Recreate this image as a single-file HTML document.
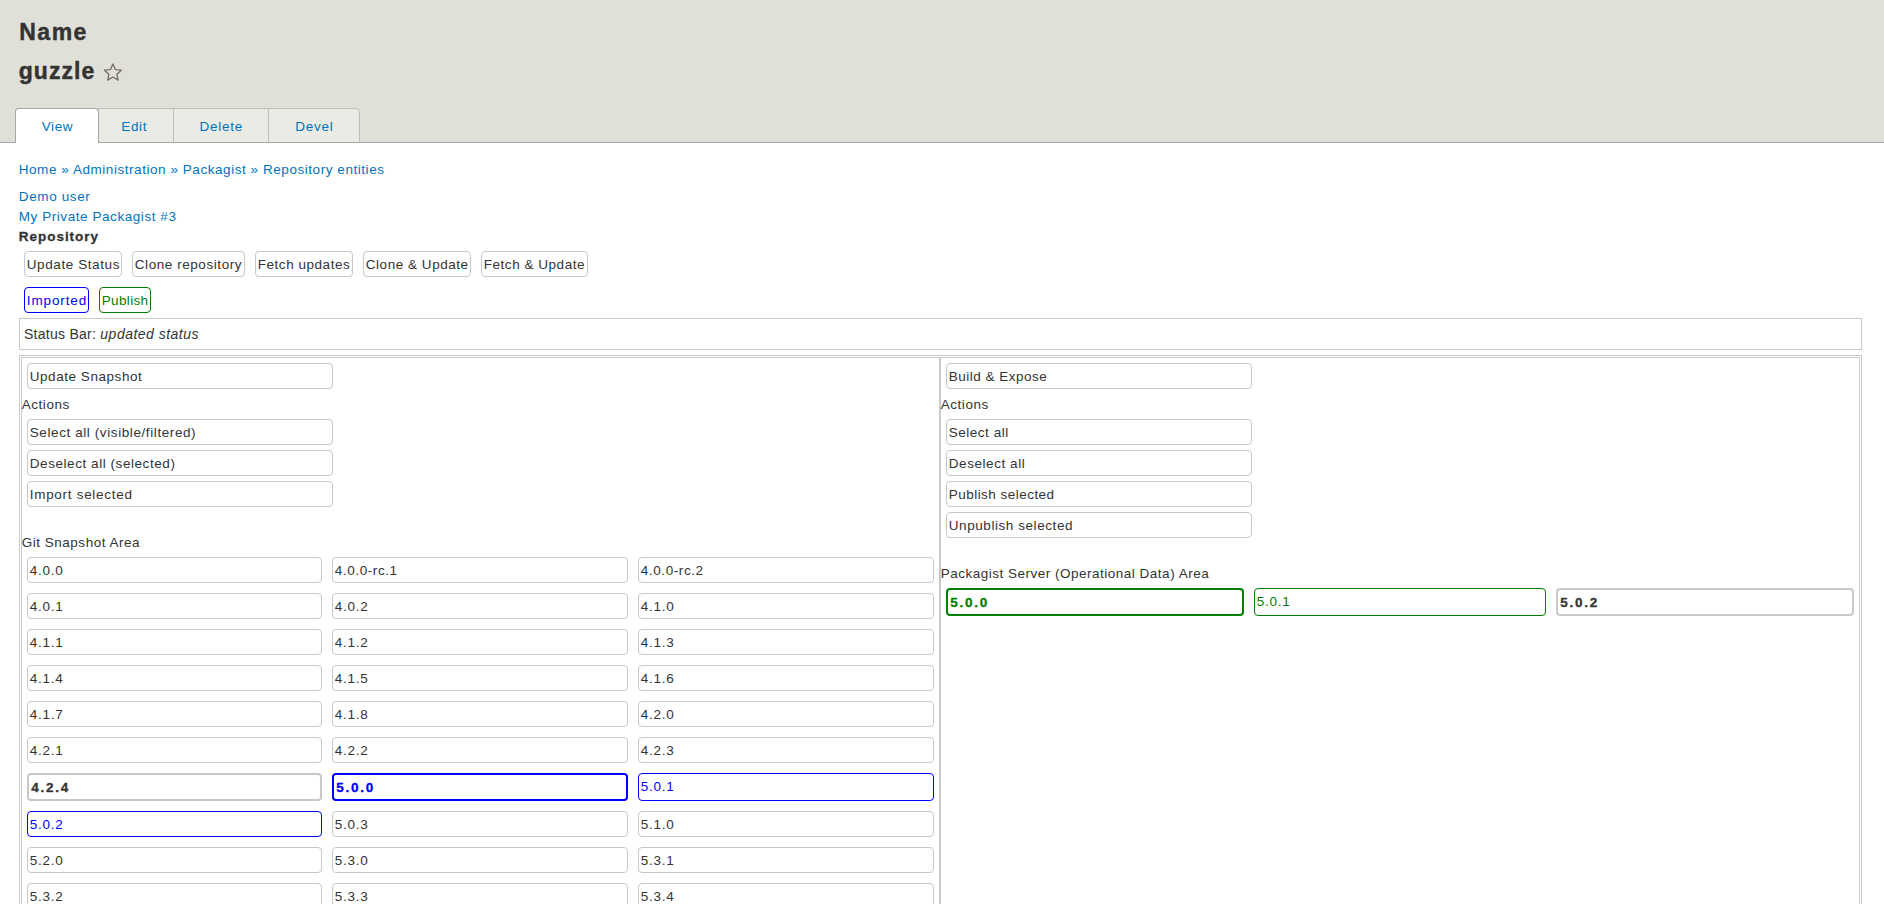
<!DOCTYPE html>
<html>
<head>
<meta charset="utf-8">
<style>
html,body{margin:0;padding:0;background:#fff;width:1884px;height:904px;overflow:hidden;position:relative;}
body{font-family:"Liberation Sans",sans-serif;font-size:14px;color:#333;}
.t{position:absolute;white-space:nowrap;line-height:16px;}
.r{position:absolute;box-sizing:border-box;}
</style>
</head>
<body>
<div class="r" style="left:0;top:0;width:1884px;height:142px;background:#e0e0d8;"></div>
<div class="t" style="left:19.25px;top:18px;letter-spacing:1.500px;font-size:23px;line-height:28px;font-weight:bold;color:#333;-webkit-text-stroke:0.45px #333;">Name</div>
<div class="t" style="left:18.75px;top:57px;letter-spacing:1.050px;font-size:23px;line-height:28px;font-weight:bold;color:#333;-webkit-text-stroke:0.45px #333;">guzzle</div>
<svg style="position:absolute;left:100px;top:60px;" width="26" height="24" viewBox="100 60 26 24"><path d="M112.90,64.00 L115.34,69.54 L121.36,70.15 L116.85,74.18 L118.13,80.10 L112.90,77.05 L107.67,80.10 L108.95,74.18 L104.44,70.15 L110.46,69.54 Z" fill="none" stroke="#737062" stroke-width="1.3" stroke-linejoin="round"/></svg>
<div class="r" style="left:98px;top:108px;width:262px;height:34px;background:#ebebe6;border:1px solid #bfbfba;border-bottom:0;border-radius:0 5px 0 0;"></div>
<div class="r" style="left:173px;top:109px;width:1px;height:33px;background:#bfbfba;"></div>
<div class="r" style="left:268px;top:109px;width:1px;height:33px;background:#bfbfba;"></div>
<div class="r" style="left:0;top:142px;width:1884px;height:1px;background:#a6a6a6;"></div>
<div class="r" style="left:15px;top:108px;width:84px;height:35px;background:#fff;border:1px solid #a6a6a6;border-bottom:0;border-radius:4px 4px 0 0;"></div>
<div class="t" style="left:41.75px;top:118.5px;letter-spacing:0.611px;font-size:13.5px;color:#0074bd;">View</div>
<div class="t" style="left:121.25px;top:118.5px;letter-spacing:0.638px;font-size:13.5px;color:#0074bd;">Edit</div>
<div class="t" style="left:199.45px;top:118.5px;letter-spacing:0.738px;font-size:13.5px;color:#0074bd;">Delete</div>
<div class="t" style="left:295.35px;top:118.5px;letter-spacing:0.700px;font-size:13.5px;color:#0074bd;">Devel</div>
<div class="t" style="left:18.75px;top:161.5px;letter-spacing:0.552px;font-size:13.5px;color:#0074bd;">Home » Administration » Packagist » Repository entities</div>
<div class="t" style="left:18.75px;top:188.5px;letter-spacing:0.637px;font-size:13.5px;color:#0074bd;">Demo user</div>
<div class="t" style="left:18.75px;top:208.5px;letter-spacing:0.562px;font-size:13.5px;color:#0074bd;">My Private Packagist #3</div>
<div class="t" style="left:18.75px;top:228.5px;letter-spacing:0.975px;font-size:13.5px;font-weight:bold;color:#333;-webkit-text-stroke:0.3px currentColor;">Repository</div>
<div class="r" style="left:24px;top:251px;width:98px;height:26px;border:1px solid #c8c8c8;border-radius:4px;background:#fff;"></div>
<div class="t" style="left:26.75px;top:256.5px;letter-spacing:0.590px;font-size:13.5px;color:#333;">Update Status</div>
<div class="r" style="left:132px;top:251px;width:113px;height:26px;border:1px solid #c8c8c8;border-radius:4px;background:#fff;"></div>
<div class="t" style="left:134.75px;top:256.5px;letter-spacing:0.564px;font-size:13.5px;color:#333;">Clone repository</div>
<div class="r" style="left:255px;top:251px;width:98px;height:26px;border:1px solid #c8c8c8;border-radius:4px;background:#fff;"></div>
<div class="t" style="left:257.75px;top:256.5px;letter-spacing:0.534px;font-size:13.5px;color:#333;">Fetch updates</div>
<div class="r" style="left:363px;top:251px;width:108px;height:26px;border:1px solid #c8c8c8;border-radius:4px;background:#fff;"></div>
<div class="t" style="left:365.75px;top:256.5px;letter-spacing:0.543px;font-size:13.5px;color:#333;">Clone &amp; Update</div>
<div class="r" style="left:481px;top:251px;width:107px;height:26px;border:1px solid #c8c8c8;border-radius:4px;background:#fff;"></div>
<div class="t" style="left:483.75px;top:256.5px;letter-spacing:0.533px;font-size:13.5px;color:#333;">Fetch &amp; Update</div>
<div class="r" style="left:24px;top:287px;width:65px;height:26px;border:1px solid #0000ff;border-radius:4px;background:#fff;"></div>
<div class="t" style="left:26.75px;top:292.5px;letter-spacing:0.875px;font-size:13.5px;color:#0000ff;">Imported</div>
<div class="r" style="left:99px;top:287px;width:52px;height:26px;border:1px solid #008000;border-radius:4px;background:#fff;"></div>
<div class="t" style="left:101.75px;top:292.5px;letter-spacing:0.343px;font-size:13.5px;color:#008000;">Publish</div>
<div class="r" style="left:19px;top:318px;width:1843px;height:32px;border:1px solid #c8c8c8;"></div>
<div class="t" style="left:24px;top:326px;color:#333;"><span style="letter-spacing:0.266px">Status Bar: </span><i style="letter-spacing:0.484px">updated status</i></div>
<div class="r" style="left:19px;top:355px;width:1843px;height:646px;border:1px solid #c8c8c8;"></div>
<div class="r" style="left:21px;top:357px;width:1839px;height:644px;border:1px solid #c8c8c8;"></div>
<div class="r" style="left:939px;top:357px;width:2px;height:600px;background:#c8c8c8;"></div>
<div class="r" style="left:27px;top:363px;width:306px;height:26px;border:1px solid #c8c8c8;border-radius:4px;background:#fff;"></div>
<div class="t" style="left:29.75px;top:368.5px;letter-spacing:0.547px;font-size:13.5px;color:#333;">Update Snapshot</div>
<div class="t" style="left:21.75px;top:396.5px;letter-spacing:0.536px;font-size:13.5px;color:#333;">Actions</div>
<div class="r" style="left:27px;top:419px;width:306px;height:26px;border:1px solid #c8c8c8;border-radius:4px;background:#fff;"></div>
<div class="t" style="left:29.75px;top:424.5px;letter-spacing:0.591px;font-size:13.5px;color:#333;">Select all (visible/filtered)</div>
<div class="r" style="left:27px;top:450px;width:306px;height:26px;border:1px solid #c8c8c8;border-radius:4px;background:#fff;"></div>
<div class="t" style="left:29.75px;top:455.5px;letter-spacing:0.560px;font-size:13.5px;color:#333;">Deselect all (selected)</div>
<div class="r" style="left:27px;top:481px;width:306px;height:26px;border:1px solid #c8c8c8;border-radius:4px;background:#fff;"></div>
<div class="t" style="left:29.75px;top:486.5px;letter-spacing:0.705px;font-size:13.5px;color:#333;">Import selected</div>
<div class="t" style="left:21.75px;top:534.5px;letter-spacing:0.511px;font-size:13.5px;color:#333;">Git Snapshot Area</div>
<div class="r" style="left:27px;top:557px;width:295px;height:26px;border:1px solid #c8c8c8;border-radius:4px;background:#fff;"></div>
<div class="t" style="left:29.75px;top:562.5px;letter-spacing:0.763px;font-size:13.5px;color:#333;">4.0.0</div>
<div class="r" style="left:332px;top:557px;width:296px;height:26px;border:1px solid #c8c8c8;border-radius:4px;background:#fff;"></div>
<div class="t" style="left:334.75px;top:562.5px;letter-spacing:0.595px;font-size:13.5px;color:#333;">4.0.0-rc.1</div>
<div class="r" style="left:638px;top:557px;width:296px;height:26px;border:1px solid #c8c8c8;border-radius:4px;background:#fff;"></div>
<div class="t" style="left:640.75px;top:562.5px;letter-spacing:0.595px;font-size:13.5px;color:#333;">4.0.0-rc.2</div>
<div class="r" style="left:27px;top:593px;width:295px;height:26px;border:1px solid #c8c8c8;border-radius:4px;background:#fff;"></div>
<div class="t" style="left:29.75px;top:598.5px;letter-spacing:0.763px;font-size:13.5px;color:#333;">4.0.1</div>
<div class="r" style="left:332px;top:593px;width:296px;height:26px;border:1px solid #c8c8c8;border-radius:4px;background:#fff;"></div>
<div class="t" style="left:334.75px;top:598.5px;letter-spacing:0.763px;font-size:13.5px;color:#333;">4.0.2</div>
<div class="r" style="left:638px;top:593px;width:296px;height:26px;border:1px solid #c8c8c8;border-radius:4px;background:#fff;"></div>
<div class="t" style="left:640.75px;top:598.5px;letter-spacing:0.763px;font-size:13.5px;color:#333;">4.1.0</div>
<div class="r" style="left:27px;top:629px;width:295px;height:26px;border:1px solid #c8c8c8;border-radius:4px;background:#fff;"></div>
<div class="t" style="left:29.75px;top:634.5px;letter-spacing:0.763px;font-size:13.5px;color:#333;">4.1.1</div>
<div class="r" style="left:332px;top:629px;width:296px;height:26px;border:1px solid #c8c8c8;border-radius:4px;background:#fff;"></div>
<div class="t" style="left:334.75px;top:634.5px;letter-spacing:0.763px;font-size:13.5px;color:#333;">4.1.2</div>
<div class="r" style="left:638px;top:629px;width:296px;height:26px;border:1px solid #c8c8c8;border-radius:4px;background:#fff;"></div>
<div class="t" style="left:640.75px;top:634.5px;letter-spacing:0.763px;font-size:13.5px;color:#333;">4.1.3</div>
<div class="r" style="left:27px;top:665px;width:295px;height:26px;border:1px solid #c8c8c8;border-radius:4px;background:#fff;"></div>
<div class="t" style="left:29.75px;top:670.5px;letter-spacing:0.763px;font-size:13.5px;color:#333;">4.1.4</div>
<div class="r" style="left:332px;top:665px;width:296px;height:26px;border:1px solid #c8c8c8;border-radius:4px;background:#fff;"></div>
<div class="t" style="left:334.75px;top:670.5px;letter-spacing:0.763px;font-size:13.5px;color:#333;">4.1.5</div>
<div class="r" style="left:638px;top:665px;width:296px;height:26px;border:1px solid #c8c8c8;border-radius:4px;background:#fff;"></div>
<div class="t" style="left:640.75px;top:670.5px;letter-spacing:0.763px;font-size:13.5px;color:#333;">4.1.6</div>
<div class="r" style="left:27px;top:701px;width:295px;height:26px;border:1px solid #c8c8c8;border-radius:4px;background:#fff;"></div>
<div class="t" style="left:29.75px;top:706.5px;letter-spacing:0.763px;font-size:13.5px;color:#333;">4.1.7</div>
<div class="r" style="left:332px;top:701px;width:296px;height:26px;border:1px solid #c8c8c8;border-radius:4px;background:#fff;"></div>
<div class="t" style="left:334.75px;top:706.5px;letter-spacing:0.763px;font-size:13.5px;color:#333;">4.1.8</div>
<div class="r" style="left:638px;top:701px;width:296px;height:26px;border:1px solid #c8c8c8;border-radius:4px;background:#fff;"></div>
<div class="t" style="left:640.75px;top:706.5px;letter-spacing:0.763px;font-size:13.5px;color:#333;">4.2.0</div>
<div class="r" style="left:27px;top:737px;width:295px;height:26px;border:1px solid #c8c8c8;border-radius:4px;background:#fff;"></div>
<div class="t" style="left:29.75px;top:742.5px;letter-spacing:0.763px;font-size:13.5px;color:#333;">4.2.1</div>
<div class="r" style="left:332px;top:737px;width:296px;height:26px;border:1px solid #c8c8c8;border-radius:4px;background:#fff;"></div>
<div class="t" style="left:334.75px;top:742.5px;letter-spacing:0.763px;font-size:13.5px;color:#333;">4.2.2</div>
<div class="r" style="left:638px;top:737px;width:296px;height:26px;border:1px solid #c8c8c8;border-radius:4px;background:#fff;"></div>
<div class="t" style="left:640.75px;top:742.5px;letter-spacing:0.763px;font-size:13.5px;color:#333;">4.2.3</div>
<div class="r" style="left:27px;top:773px;width:295px;height:28px;border:2px solid #c8c8c8;border-radius:4px;background:#fff;"></div>
<div class="t" style="left:31.35px;top:779.5px;letter-spacing:1.748px;font-size:13.5px;font-weight:bold;color:#333;-webkit-text-stroke:0.3px currentColor;">4.2.4</div>
<div class="r" style="left:332px;top:773px;width:296px;height:28px;border:2px solid #0000ff;border-radius:4px;background:#fff;"></div>
<div class="t" style="left:336.35px;top:779.5px;letter-spacing:1.748px;font-size:13.5px;font-weight:bold;color:#0000ff;-webkit-text-stroke:0.3px currentColor;">5.0.0</div>
<div class="r" style="left:638px;top:773px;width:296px;height:28px;border:1px solid #0000ff;border-radius:4px;background:#fff;"></div>
<div class="t" style="left:640.75px;top:778.5px;letter-spacing:0.763px;font-size:13.5px;color:#0000ff;">5.0.1</div>
<div class="r" style="left:27px;top:811px;width:295px;height:26px;border:1px solid #0000ff;border-radius:4px;background:#fff;"></div>
<div class="t" style="left:29.75px;top:816.5px;letter-spacing:0.763px;font-size:13.5px;color:#0000ff;">5.0.2</div>
<div class="r" style="left:332px;top:811px;width:296px;height:26px;border:1px solid #c8c8c8;border-radius:4px;background:#fff;"></div>
<div class="t" style="left:334.75px;top:816.5px;letter-spacing:0.763px;font-size:13.5px;color:#333;">5.0.3</div>
<div class="r" style="left:638px;top:811px;width:296px;height:26px;border:1px solid #c8c8c8;border-radius:4px;background:#fff;"></div>
<div class="t" style="left:640.75px;top:816.5px;letter-spacing:0.763px;font-size:13.5px;color:#333;">5.1.0</div>
<div class="r" style="left:27px;top:847px;width:295px;height:26px;border:1px solid #c8c8c8;border-radius:4px;background:#fff;"></div>
<div class="t" style="left:29.75px;top:852.5px;letter-spacing:0.763px;font-size:13.5px;color:#333;">5.2.0</div>
<div class="r" style="left:332px;top:847px;width:296px;height:26px;border:1px solid #c8c8c8;border-radius:4px;background:#fff;"></div>
<div class="t" style="left:334.75px;top:852.5px;letter-spacing:0.763px;font-size:13.5px;color:#333;">5.3.0</div>
<div class="r" style="left:638px;top:847px;width:296px;height:26px;border:1px solid #c8c8c8;border-radius:4px;background:#fff;"></div>
<div class="t" style="left:640.75px;top:852.5px;letter-spacing:0.763px;font-size:13.5px;color:#333;">5.3.1</div>
<div class="r" style="left:27px;top:883px;width:295px;height:26px;border:1px solid #c8c8c8;border-radius:4px;background:#fff;"></div>
<div class="t" style="left:29.75px;top:888.5px;letter-spacing:0.763px;font-size:13.5px;color:#333;">5.3.2</div>
<div class="r" style="left:332px;top:883px;width:296px;height:26px;border:1px solid #c8c8c8;border-radius:4px;background:#fff;"></div>
<div class="t" style="left:334.75px;top:888.5px;letter-spacing:0.763px;font-size:13.5px;color:#333;">5.3.3</div>
<div class="r" style="left:638px;top:883px;width:296px;height:26px;border:1px solid #c8c8c8;border-radius:4px;background:#fff;"></div>
<div class="t" style="left:640.75px;top:888.5px;letter-spacing:0.763px;font-size:13.5px;color:#333;">5.3.4</div>
<div class="r" style="left:946px;top:363px;width:306px;height:26px;border:1px solid #c8c8c8;border-radius:4px;background:#fff;"></div>
<div class="t" style="left:948.75px;top:368.5px;letter-spacing:0.490px;font-size:13.5px;color:#333;">Build &amp; Expose</div>
<div class="t" style="left:940.75px;top:396.5px;letter-spacing:0.536px;font-size:13.5px;color:#333;">Actions</div>
<div class="r" style="left:946px;top:419px;width:306px;height:26px;border:1px solid #c8c8c8;border-radius:4px;background:#fff;"></div>
<div class="t" style="left:948.75px;top:424.5px;letter-spacing:0.517px;font-size:13.5px;color:#333;">Select all</div>
<div class="r" style="left:946px;top:450px;width:306px;height:26px;border:1px solid #c8c8c8;border-radius:4px;background:#fff;"></div>
<div class="t" style="left:948.75px;top:455.5px;letter-spacing:0.562px;font-size:13.5px;color:#333;">Deselect all</div>
<div class="r" style="left:946px;top:481px;width:306px;height:26px;border:1px solid #c8c8c8;border-radius:4px;background:#fff;"></div>
<div class="t" style="left:948.75px;top:486.5px;letter-spacing:0.469px;font-size:13.5px;color:#333;">Publish selected</div>
<div class="r" style="left:946px;top:512px;width:306px;height:26px;border:1px solid #c8c8c8;border-radius:4px;background:#fff;"></div>
<div class="t" style="left:948.75px;top:517.5px;letter-spacing:0.569px;font-size:13.5px;color:#333;">Unpublish selected</div>
<div class="t" style="left:940.75px;top:565.5px;letter-spacing:0.501px;font-size:13.5px;color:#333;">Packagist Server (Operational Data) Area</div>
<div class="r" style="left:946px;top:588px;width:298px;height:28px;border:2px solid #008000;border-radius:4px;background:#fff;"></div>
<div class="t" style="left:950.35px;top:594.5px;letter-spacing:1.748px;font-size:13.5px;font-weight:bold;color:#008000;-webkit-text-stroke:0.3px currentColor;">5.0.0</div>
<div class="r" style="left:1254px;top:588px;width:292px;height:28px;border:1px solid #008000;border-radius:4px;background:#fff;"></div>
<div class="t" style="left:1256.75px;top:593.5px;letter-spacing:0.763px;font-size:13.5px;color:#008000;">5.0.1</div>
<div class="r" style="left:1556px;top:588px;width:298px;height:28px;border:2px solid #c8c8c8;border-radius:4px;background:#fff;"></div>
<div class="t" style="left:1560.35px;top:594.5px;letter-spacing:1.748px;font-size:13.5px;font-weight:bold;color:#333;-webkit-text-stroke:0.3px currentColor;">5.0.2</div>
</body>
</html>
